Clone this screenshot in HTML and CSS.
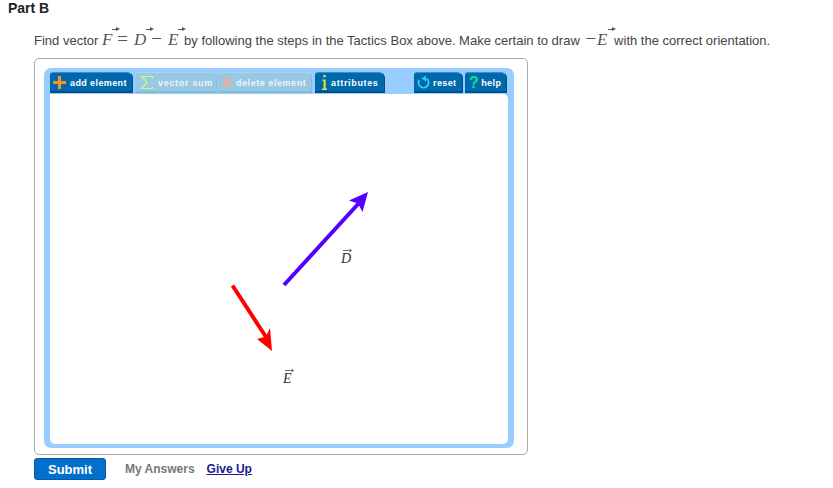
FILE: index.html
```html
<!DOCTYPE html>
<html lang="en">
<head>
<meta charset="utf-8">
<title>Part B</title>
<link rel="stylesheet" href="styles.css">
</head>
<body>
<h2 class="part-title">Part B</h2>
<p class="prompt">Find vector <span class="math"><span class="vec">F</span><span class="op">=</span><span class="vec">D</span><span class="op">−</span><span class="vec">E</span></span> by following the steps in the Tactics Box above. Make certain to draw <span class="math math-neg"><span class="minus">−</span><span class="vec">E</span></span> with the correct orientation.</p>
<div class="tool-box">
  <div class="panel">
    <div class="toolbar">
      <div class="tab tab-add"><svg class="ico" width="15" height="15" viewBox="0 0 15 15"><path d="M6 1h3v5h5v3H9v5H6V9H1V6h5z" fill="#f7941d"/></svg><span>add element</span></div>
      <div class="tab tab-sum off"><svg class="ico" width="14" height="15" viewBox="0 0 14 15"><path d="M12.500 3.500V1.500H1.500l5.500 6-5.500 6h11v-2" fill="none" stroke="#d4f58e" stroke-width="1.200"/></svg><span>vector sum</span></div>
      <div class="tab tab-del off"><svg class="ico" width="13" height="13" viewBox="0 0 13 13"><path d="M2 1.500l9 10M11 1.500l-9 10" stroke="#f2aa9c" stroke-width="2.400" fill="none"/></svg><span>delete element</span></div>
      <div class="tab tab-attr"><svg class="ico" width="7" height="17" viewBox="0 0 7 17"><path d="M2.300 1h2.400v2.200H2.300zM1.500 5.500h3.200v9h1.300v1.500H1v-1.500h1.500v-7.500h-1z" fill="#d5e23a"/></svg><span>attributes</span></div>
      <div class="spacer"></div>
      <div class="tab tab-reset"><svg class="ico" width="13" height="15" viewBox="0 0 13 15"><path d="M2.300 5a5 5 0 1 0 7.400-1.200" fill="none" stroke="#2ed0f0" stroke-width="1.900"/><path d="M4.500 3.500 L9 0.500 v6z" fill="#2ed0f0"/></svg><span>reset</span></div>
      <div class="tab tab-help"><span class="q">?</span><span>help</span></div>
    </div>
    <div class="canvas">
      <svg class="drawing" width="458" height="350" viewBox="0 0 458 350">
        <line x1="234" y1="191" x2="309" y2="109" stroke="#5500ff" stroke-width="4"/>
        <path d="M318 98 L312.500 118 L308 109.500 L299 106.500 Z" fill="#5500ff"/>
        <line x1="182.500" y1="191.500" x2="216" y2="243" stroke="#ff0000" stroke-width="4"/>
        <path d="M222 257 L207 245 L216 242.500 L220 234 Z" fill="#ff0000"/>
        <text class="lbl" x="291" y="169">D</text>
        <path class="lbl-arrow" d="M293 156.500h8M299.500 155l2 1.500-2 1.500"/>
        <text class="lbl" x="233" y="289">E</text>
        <path class="lbl-arrow" d="M235 276.500h8M241.500 275l2 1.500-2 1.500"/>
      </svg>
    </div>
  </div>
</div>
<div class="actions">
  <button class="submit" type="button">Submit</button>
  <span class="my-answers">My Answers</span>
  <a class="give-up" href="#">Give Up</a>
</div>
</body>
</html>
```

FILE: styles.css
```css
* { box-sizing: border-box; }
html, body { margin: 0; padding: 0; background: #fff; }
body {
  width: 833px;
  height: 488px;
  overflow: hidden;
  font-family: "Liberation Sans", Arial, sans-serif;
  color: #333;
}
.part-title {
  margin: 0;
  padding: 1px 0 0 8px;
  height: 16px;
  font-size: 14px;
  line-height: 15px;
  font-weight: bold;
  color: #222;
}
.prompt {
  margin: 14px 0 0 34px;
  height: 28px;
  font-size: 13px;
  line-height: 18px;
  white-space: nowrap;
  color: #444;
}
.math {
  font-family: "Liberation Serif", "Times New Roman", serif;
  font-size: 17px;
  line-height: 18px;
  display: inline-block;
  color: #555;
  margin-right: 2px;
}
.math-neg { margin-left: 2px; margin-right: 3px; }
.vec { position: relative; font-style: italic; display: inline-block; }
.vec::before {
  content: "";
  position: absolute;
  left: 100%;
  top: -2px;
  width: 6px;
  height: 1px;
  background: #555;
}
.vec::after {
  content: "";
  position: absolute;
  left: calc(100% + 4px);
  top: -4px;
  border-left: 4px solid #555;
  border-top: 2.500px solid transparent;
  border-bottom: 2.500px solid transparent;
}
.op { margin: 0 6px 0 5px; font-size: 19px; }
.minus { margin-right: 1px; font-size: 19px; }
.tool-box {
  margin: 0 0 0 34px;
  width: 494px;
  height: 397px;
  padding: 9px 13px 6px 9px;
  border: 1px solid #aaa;
  border-radius: 5px;
}
.panel {
  width: 470px;
  height: 380px;
  padding: 4px 6px;
  background: #99ccff;
  border-radius: 7px;
  display: flex;
  flex-direction: column;
}
.toolbar {
  display: flex;
  align-items: flex-start;
  height: 22px;
  flex: none;
  padding-right: 1px;
}
.tab {
  height: 21px;
  display: flex;
  align-items: center;
  padding-top: 1px;
  background: #0069ad;
  border-right: 1px solid #004f86;
  border-bottom: 2px solid #004f86;
  border-top: 1px solid #3c8fc4;
  border-radius: 3px 6px 0 0;
  color: #fff;
  font-size: 9px;
  font-weight: bold;
  letter-spacing: 0.400px;
  white-space: nowrap;
}
.tab.off {
  background: #97c9e2;
  border-color: #a9d5ea #86bbd6 #86bbd6 #97c9e2;
  color: #eaf5fa;
}
.ico { flex: none; }
.tab-add { width: 83px; padding-left: 2px; gap: 3px; }
.tab-sum { width: 81px; margin-left: 3px; padding-left: 4px; gap: 4px; letter-spacing: 0.700px; }
.tab-del { width: 94px; margin-left: 1px; padding-left: 3px; gap: 2px; letter-spacing: 0.550px; }
.tab-attr { width: 70px; margin-left: 3px; padding-left: 6px; gap: 3px; letter-spacing: 0.650px; }
.spacer { flex: 1; }
.tab-reset { width: 49px; padding-left: 3px; gap: 3px; }
.tab-help { width: 42px; margin-left: 2px; padding-left: 4px; gap: 2px; }
.q { color: #10e090; font-size: 16px; font-weight: bold; line-height: 1; }
.canvas {
  width: 458px;
  height: 350px;
  background: #fff;
  border-radius: 0 5px 5px 5px;
  flex: none;
}
.drawing { display: block; }
.lbl {
  font-family: "Liberation Serif", "Times New Roman", serif;
  font-style: italic;
  font-size: 14px;
  fill: #333;
}
.lbl-arrow { fill: none; stroke: #444; stroke-width: 0.800; }
.actions {
  display: flex;
  align-items: center;
  margin: 3px 0 0 34px;
  height: 22px;
  font-size: 12px;
  font-weight: bold;
}
.submit {
  width: 72px;
  height: 22px;
  padding: 0;
  background: #0070cc;
  border: 1px solid #005da8;
  border-radius: 3px;
  color: #fff;
  font: bold 13px "Liberation Sans", Arial, sans-serif;
}
.my-answers { margin-left: 19px; color: #777; }
.give-up { margin-left: 12px; color: #1a1a8c; text-decoration: underline; }
```
